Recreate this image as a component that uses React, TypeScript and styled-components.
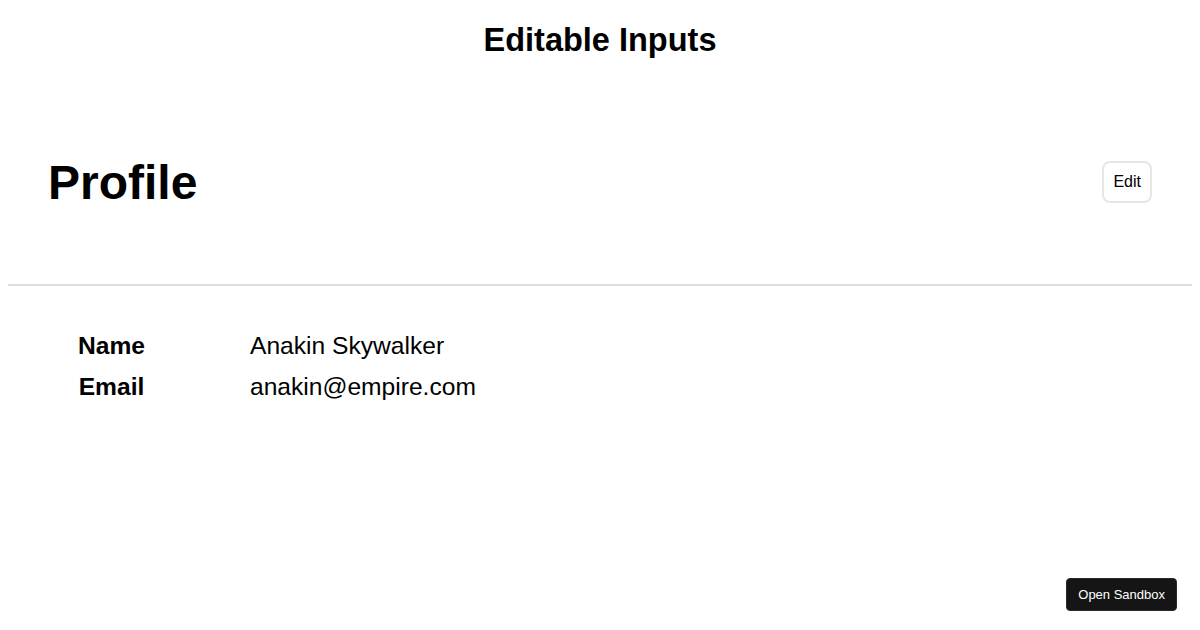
import styled, { createGlobalStyle } from "styled-components";

const fields = [
  { label: "Name", value: "Anakin Skywalker" },
  { label: "Email", value: "anakin@empire.com" },
];

export default function App() {
  return (
    <>
      <GlobalStyle />
      <Title>Editable Inputs</Title>

      <Header>
        <Heading>Profile</Heading>
        <EditButton>Edit</EditButton>
      </Header>

      <Fields>
        {fields.map((field) => (
          <Row key={field.label}>
            <Label>{field.label}</Label>
            <Value>{field.value}</Value>
          </Row>
        ))}
      </Fields>

      <SandboxButton>Open Sandbox</SandboxButton>
    </>
  );
}

const GlobalStyle = createGlobalStyle`
  body {
    margin: 8px;
    background: #ffffff;
    color: #000000;
    font-family: "Liberation Sans", Arial, sans-serif;
  }
`;

const Title = styled.h1`
  margin: 14.4px 0 21.44px;
  font-size: 32.5px;
  font-weight: 700;
  text-align: center;
`;

const Header = styled.header`
  display: flex;
  justify-content: space-between;
  align-items: center;
  padding: 74px 40px;
  border-bottom: 2px solid #dedede;
`;

const Heading = styled.h2`
  margin: 0;
  font-size: 48px;
  font-weight: 700;
`;

const EditButton = styled.button`
  font-family: "Liberation Sans", Arial, sans-serif;
  font-size: 16px;
  color: #000000;
  background: #ffffff;
  border: 2px solid #e6e6e6;
  border-radius: 8px;
  padding: 10px 9px;
  cursor: pointer;
`;

const Fields = styled.section`
  display: flex;
  flex-direction: column;
  gap: 13px;
  padding: 46px 40px;
`;

const Row = styled.div`
  display: grid;
  grid-template-columns: 127px 1fr;
  column-gap: 75px;
  font-size: 24.6px;
`;

const Label = styled.span`
  font-weight: 700;
  text-align: center;
`;

const Value = styled.span`
  font-weight: 400;
`;

const SandboxButton = styled.button`
  position: fixed;
  right: 23px;
  bottom: 19px;
  padding: 8px 11px;
  font-family: "Liberation Sans", Arial, sans-serif;
  font-size: 13px;
  color: #ffffff;
  background: #151515;
  border: 1px solid #2a2a2a;
  border-radius: 4px;
  cursor: pointer;
`;
